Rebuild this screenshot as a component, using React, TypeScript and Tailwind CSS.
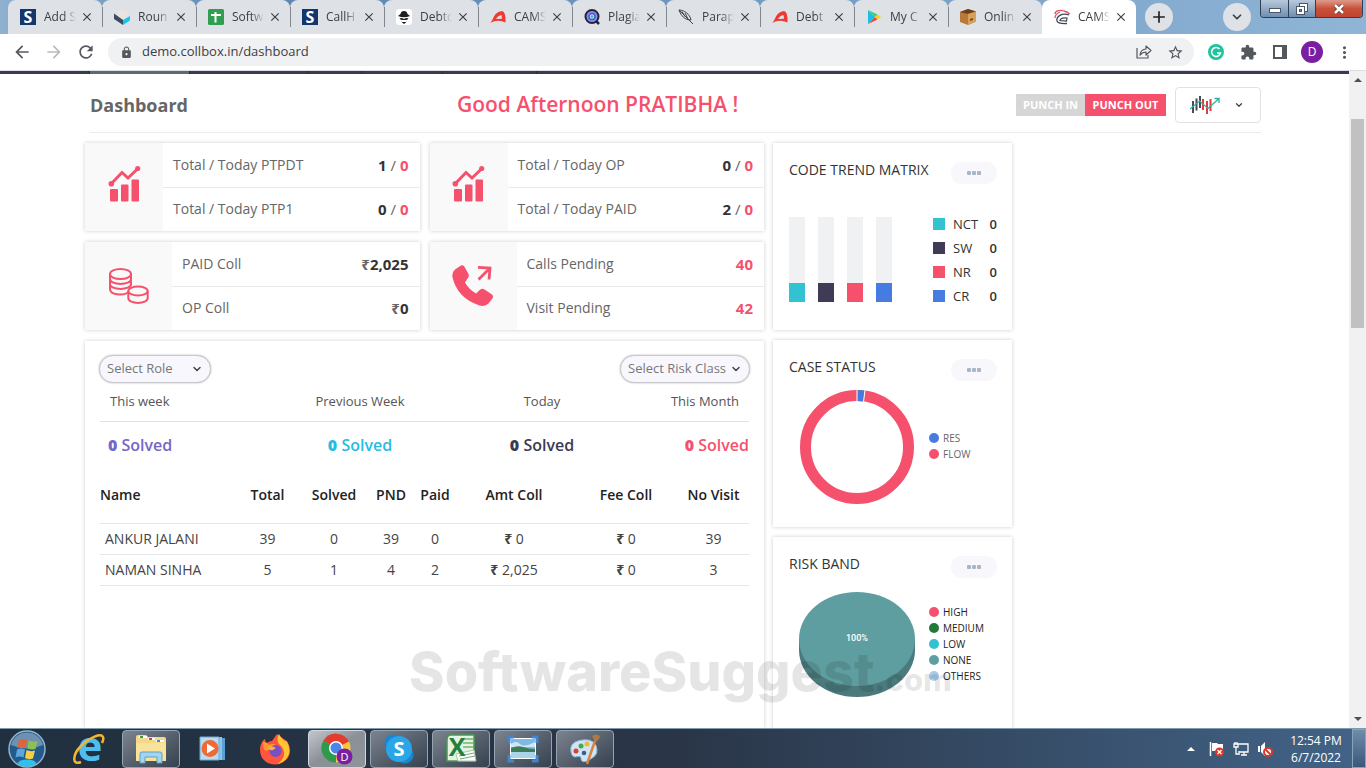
import type { ReactNode } from "react";
import {
    MdAdd,
    MdArrowBack,
    MdArrowForward,
    MdClose,
    MdExtension,
    MdLock,
    MdMoreVert,
    MdRefresh,
    MdStarBorder,
} from "react-icons/md";
import { ChevronDown } from "lucide-react";

/* ---------- tab icons ---------- */

function LetterIcon() {
    return (
        <svg viewBox="0 0 16 16" className="size-4 overflow-visible">
            <rect width="16" height="16" fill="#15356b" />
            <text x="8" y="14" textAnchor="middle" fontSize="16" fontWeight="700" fill="#fff" fontFamily="Open Sans, sans-serif">S</text>
        </svg>
    );
}

function HexIcon() {
    return (
        <svg viewBox="0 0 16 16" className="size-4">
            <path d="M8 0 14 3v6l-5 2-5-3V2z" fill="#e8e4e4" />
            <path d="M0 4.500 9 11v5L0 10z" fill="#3d4a60" />
            <path d="M9 11 16 7v4.500L9 16z" fill="#12c8ee" />
        </svg>
    );
}

function SheetIcon() {
    return (
        <svg viewBox="0 0 16 16" className="size-4">
            <rect width="16" height="16" rx="1.500" fill="#2f9e50" />
            <path d="M3 6h10M7.500 3v10.500" stroke="#fff" strokeWidth="2" />
        </svg>
    );
}

function SpyIcon() {
    return (
        <svg viewBox="0 0 16 16" className="size-4">
            <rect width="16" height="16" rx="3" fill="#fff" />
            <path d="M4.500 5Q5 2 8 2t3.500 3L14 7q-6 2.500-12 0z" fill="#1d1d1f" />
            <path d="M3.500 9.500q2-1 4.500.500 2.500-1.500 4.500-.500-1 2-4.500 1.500-3.500.500-4.500-1.500zM5 12.500q3 1 6 0L8 15z" fill="#1d1d1f" />
        </svg>
    );
}

function SwooshIcon() {
    return (
        <svg viewBox="0 0 16 16" className="size-4">
            <path
                d="M0 14C4 11 3 3 12 2q4 .500 3.500 11.500-5-2.500-10-1.500Q3 12.500 0 14zM6 10l6-.300L11.500 6Q8 6.500 6 10z"
                fill="#ee3a30"
                fillRule="evenodd"
            />
        </svg>
    );
}

function LensIcon() {
    return (
        <svg viewBox="0 0 16 16" className="size-4">
            <circle cx="8" cy="7.500" r="6.500" fill="#8d8bf0" stroke="#22253a" strokeWidth="2" />
            <circle cx="8" cy="7.500" r="3" fill="#c4f2e4" stroke="#4a55d6" strokeWidth="1.500" />
            <circle cx="8" cy="7.500" r="1.300" fill="#29c27b" />
            <path d="m12 12 3 3" stroke="#22253a" strokeWidth="2.500" />
        </svg>
    );
}

function FeatherIcon() {
    return (
        <svg viewBox="0 0 16 16" className="size-4" fill="none" stroke="#444" strokeWidth="1">
            <path d="M1 1c5 0 11 4 12 10-6 0-10-4-12-10zM1 1l14 14M4 2.500l3 5M7 4l3 6" />
        </svg>
    );
}

function PlayIcon() {
    return (
        <svg viewBox="0 0 16 16" className="size-4">
            <path d="M2 1v14l7-7z" fill="#19bfe6" />
            <path d="M2 1l7 7 2.500-2.500z" fill="#3ccf6e" />
            <path d="M2 15l7-7 2.500 2.500z" fill="#f0443e" />
            <path d="M9 8l2.500-2.500L15 8l-3.500 2.500z" fill="#ffc928" />
        </svg>
    );
}

function BoxIcon() {
    return (
        <svg viewBox="0 0 16 16" className="size-4">
            <path d="M0 3 8 0l8 2.500v10L8 16 0 13z" fill="#b9793a" />
            <path d="M0 3 8 0l8 2.500L8 5z" fill="#6e3f17" />
            <path d="M8 5l8-2.500v10L8 16z" fill="#d9a05a" />
            <path d="M10 10l3-1v2l-3 1z" fill="#7a4a20" />
        </svg>
    );
}

function CamsIcon() {
    return (
        <svg viewBox="0 0 16 16" className="size-4" fill="none">
            <path d="M1 5C1 1 7 1 10 2q4 1 5.500 3M1 9q0-4 5-6" stroke="#e0525f" strokeWidth="1.300" />
            <path d="M15 6C8 3 2 8 3 12q1 3 10 2.500" stroke="#3f4658" strokeWidth="1.300" />
            <path d="M6 11.500q1-3.500 7-2.500l-.500 3z" stroke="#3f4658" strokeWidth="1.200" />
        </svg>
    );
}

const tabs: { title: string; icon: ReactNode }[] = [
    { title: "Add S", icon: <LetterIcon /> },
    { title: "Roun", icon: <HexIcon /> },
    { title: "Softw", icon: <SheetIcon /> },
    { title: "CallH", icon: <LetterIcon /> },
    { title: "Debto", icon: <SpyIcon /> },
    { title: "CAMS", icon: <SwooshIcon /> },
    { title: "Plagia", icon: <LensIcon /> },
    { title: "Parap", icon: <FeatherIcon /> },
    { title: "Debt", icon: <SwooshIcon /> },
    { title: "My C", icon: <PlayIcon /> },
    { title: "Onlin", icon: <BoxIcon /> },
    { title: "CAMS", icon: <CamsIcon /> },
];

function TabStrip() {
    return (
        <div className="flex h-[34px] shrink-0 items-center bg-linear-to-r from-[#8fb0cf] via-[#5b86b3] via-20% to-[#8fb5d6] pr-[3px] pl-2">
            {tabs.map((tab, i) => {
                const active = i === tabs.length - 1;
                return (
                    <div
                        key={i}
                        className={`flex h-full w-[94px] shrink-0 items-center rounded-t-lg ${active ? "bg-white" : "bg-[#dee1e6]"}`}
                    >
                        <span className={`h-5 w-px ${i === 0 || active ? "" : "bg-[#80868b]"}`} />
                        <button className="flex items-center gap-2 pl-[11px]">
                            {tab.icon}
                            <span className="w-8 text-left text-xs whitespace-nowrap text-[#3c4043] [mask-image:linear-gradient(to_right,black_60%,transparent)]">
                                {tab.title}
                            </span>
                        </button>
                        <button aria-label="Close tab" className="ml-1 text-[#3c4043]">
                            <MdClose size={14} />
                        </button>
                    </div>
                );
            })}
            <button aria-label="New tab" className="ml-[9px] flex size-7 shrink-0 items-center justify-center rounded-full bg-[#dee1e6] text-[#202124]">
                <MdAdd size={20} />
            </button>
            <button aria-label="Search tabs" className="ml-auto flex size-7 shrink-0 items-center justify-center rounded-full bg-[#dee1e6] text-[#3c4043]">
                <ChevronDown size={14} strokeWidth={3} />
            </button>
            <div className="ml-[9px] flex h-[18px] shrink-0 self-start overflow-hidden rounded-b border border-t-0 border-[#2d3f55]">
                <button aria-label="Minimize" className="flex w-7 items-center justify-center border-r border-[#2d3f55] bg-linear-to-b from-[#b8c9dc] to-[#6f8eb0]">
                    <svg viewBox="0 0 12 8" className="h-2 w-3">
                        <rect x=".5" y="3.500" width="11" height="4" fill="#fff" stroke="#4b5666" />
                    </svg>
                </button>
                <button aria-label="Restore" className="flex w-[27px] items-center justify-center border-r border-[#2d3f55] bg-linear-to-b from-[#b8c9dc] to-[#6f8eb0]">
                    <svg viewBox="0 0 12 12" className="size-3" fill="#fff" stroke="#4b5666">
                        <rect x="3.500" y=".5" width="8" height="8" />
                        <rect x=".5" y="3.500" width="8" height="8" />
                        <rect x="3.500" y="6.500" width="2" height="2" fill="#7f94ad" />
                    </svg>
                </button>
                <button aria-label="Close" className="flex w-[46px] items-center justify-center bg-linear-to-b from-[#dd9a8c] via-[#c9503a] to-[#c04430]">
                    <svg viewBox="0 0 12 10" className="h-[10px] w-3">
                        <path d="m2 1 8 8M10 1 2 9" stroke="#5f3030" strokeWidth="4" />
                        <path d="m2 1 8 8M10 1 2 9" stroke="#fff" strokeWidth="2.500" />
                    </svg>
                </button>
            </div>
        </div>
    );
}

function Toolbar() {
    return (
        <div className="flex h-[37px] shrink-0 items-center border-b border-[#dcdfe0] bg-white px-3 text-[#54585d]">
            <div className="flex gap-3">
                <button aria-label="Back"><MdArrowBack size={20} /></button>
                <button aria-label="Forward" className="text-[#b9bbbe]"><MdArrowForward size={20} /></button>
                <button aria-label="Reload"><MdRefresh size={20} /></button>
            </div>
            <div className="ml-3 flex h-7 flex-1 items-center rounded-full bg-[#f0f1f3] pr-[10px] pl-3">
                <MdLock size={13} />
                <input
                    aria-label="Address"
                    className="ml-[9px] min-w-0 flex-1 bg-transparent text-[13px] text-[#3c4043] outline-none"
                    defaultValue="demo.collbox.in/dashboard"
                />
                <button aria-label="Share">
                    <svg viewBox="0 0 16 16" className="size-4" fill="none" stroke="currentColor" strokeWidth="1.200">
                        <path d="M1 4v10h11v-3" />
                        <path d="M4 11q.500-5.500 6-6V2l5 4.500-5 4.500V8q-3.500 0-6 3z" strokeLinejoin="round" />
                    </svg>
                </button>
                <button aria-label="Bookmark" className="ml-[15px]"><MdStarBorder size={17} /></button>
            </div>
            <button aria-label="Grammarly" className="ml-[14px]">
                <svg viewBox="0 0 16 16" className="size-4">
                    <circle cx="8" cy="8" r="8" fill="#1fc39c" />
                    <path d="M11.500 5A4.500 4.500 0 1 0 12.500 9H9" fill="none" stroke="#fff" strokeWidth="1.500" />
                </svg>
            </button>
            <button aria-label="Extensions" className="ml-4"><MdExtension size={17} /></button>
            <button aria-label="Side panel" className="ml-4">
                <svg viewBox="0 0 14 14" className="size-[14px]">
                    <path d="M1 1h12v12H1z" fill="none" stroke="currentColor" strokeWidth="2" />
                    <path d="M9 1h4v12H9z" fill="currentColor" />
                </svg>
            </button>
            <button aria-label="Profile" className="ml-[14px] flex size-[22px] items-center justify-center rounded-full bg-[#7b1fa2] text-xs text-white">
                D
            </button>
            <button aria-label="Menu" className="ml-3"><MdMoreVert size={19} /></button>
        </div>
    );
}

/* ---------- dashboard ---------- */

function ChartIcon() {
    return (
        <svg viewBox="0 0 33 37" className="mb-2 h-[37px] w-[33px]" fill="#f5516c">
            <rect x="2" y="24" width="8" height="12.500" rx="1" />
            <rect x="13" y="19.500" width="7.500" height="17" rx="1" />
            <rect x="23.500" y="14.500" width="7.500" height="22" rx="1" />
            <path d="M3 19 14 7.500l6 5.500L30 3.500" fill="none" stroke="#f5516c" strokeWidth="3" />
            <circle cx="3.300" cy="18.800" r="2.800" />
            <circle cx="29.700" cy="3.500" r="2.600" />
        </svg>
    );
}

function CoinsIcon() {
    return (
        <svg viewBox="0 0 40 36" className="h-9 w-10" fill="none" stroke="#f5516c" strokeWidth="2">
            <ellipse cx="11.500" cy="6" rx="10.500" ry="5" />
            <path d="M1 6v15c0 6 13 7 18 3.500M22 6v11.500M1 11c0 6.500 21 6.500 21 0M1 16c0 6.500 21 6.500 21 0" />
            <ellipse cx="29" cy="23" rx="9.700" ry="4.500" />
            <path d="M19.300 23v7c0 6.500 19.400 6.500 19.400 0v-7" />
        </svg>
    );
}

function CallIcon() {
    return (
        <svg viewBox="0 0 42 42" className="size-[42px]">
            <path
                d="M9 .5Q10.500-.3 12 1l4.500 8q1 2.500-1 4.500L13 17.500q4 7 11 11l4-3.700Q30 23 32.500 24.500l7.500 5q2 2 0 4.500l-3.500 4.500Q33 42 27.500 40.500 5 33 .3 11.500 0 7 3 4.500z"
                fill="#f5516c"
            />
            <path d="M26.500 14.500 37.500 3.500M26 2.300l12 .8L37 14.500" fill="none" stroke="#f5516c" strokeWidth="2.800" />
        </svg>
    );
}

type Row = { label: string; value: ReactNode };

function Ratio({ total, today }: { total: number; today: number }) {
    return (
        <>
            <b>{total}</b> <span className="text-[#666]">/</span> <b className="text-[#f5516c]">{today}</b>
        </>
    );
}

function Rupees({ amount }: { amount: string }) {
    return (
        <b>
            <span className="text-[#666]">₹</span>
            {amount}
        </b>
    );
}

function StatCard({ icon, rows, wide }: { icon: ReactNode; rows: Row[]; wide?: boolean }) {
    return (
        <section className="flex h-[88px] bg-white shadow-[0_0_4px_rgba(0,0,0,0.2)]">
            <div className={`flex shrink-0 items-center justify-center bg-[#f9f9f9] ${wide ? "w-[87px]" : "w-[78px]"}`}>{icon}</div>
            <dl className="flex flex-1 flex-col divide-y divide-[#e9e9e9]">
                {rows.map((row) => (
                    <div key={row.label} className="flex flex-1 items-center justify-between pr-[11px] pl-[10px]">
                        <dt className="text-sm text-[#666]">{row.label}</dt>
                        <dd className="text-[15px] leading-5 text-[#333]">{row.value}</dd>
                    </div>
                ))}
            </dl>
        </section>
    );
}

function PillSelect({ label, className }: { label: string; className: string }) {
    return (
        <div className={`relative h-7 ${className}`}>
            <select
                aria-label={label}
                className="size-full appearance-none rounded-full border border-[#c8c8cc] bg-[#f8f7fd] pl-[7px] text-[13px] text-[#777] shadow-[0_0_2px_rgba(0,0,0,0.3)]"
            >
                <option>{label}</option>
            </select>
            <ChevronDown size={12} strokeWidth={3} className="pointer-events-none absolute top-2 right-2 text-[#444]" />
        </div>
    );
}

const agents = [
    { name: "ANKUR JALANI", total: 39, solved: 0, pnd: 39, paid: 0, amt: "0", fee: "0", noVisit: 39 },
    { name: "NAMAN SINHA", total: 5, solved: 1, pnd: 4, paid: 2, amt: "2,025", fee: "0", noVisit: 3 },
];

function SolvedPanel() {
    return (
        <section className="flex-1 bg-white px-[15px] pt-[14px] shadow-[0_0_4px_rgba(0,0,0,0.2)]">
            <div className="-mx-px flex justify-between">
                <PillSelect label="Select Role" className="w-[112px]" />
                <PillSelect label="Select Risk Class" className="w-[130px]" />
            </div>
            <table className="w-full table-fixed">
                <colgroup>
                    <col className="w-[180px]" />
                    <col />
                    <col className="w-[204px]" />
                    <col className="w-[105px]" />
                </colgroup>
                <thead>
                    <tr className="h-[38px] border-b border-[#dee2e6] text-[13px] text-[#555] *:font-normal">
                        <th className="pl-[10px] text-left">This week</th>
                        <th>Previous Week</th>
                        <th>Today</th>
                        <th className="pr-[10px] text-right">This Month</th>
                    </tr>
                </thead>
                <tbody>
                    <tr className="h-[47px] text-base font-semibold">
                        <td className="pl-2 text-[#7467c9]"><b>0</b> Solved</td>
                        <td className="text-center text-[#27bce2]"><b>0</b> Solved</td>
                        <td className="text-center text-[#3b3a55]"><b>0</b> Solved</td>
                        <td className="text-right text-[#f5516c]"><b>0</b> Solved</td>
                    </tr>
                </tbody>
            </table>
            <table className="w-full table-fixed text-center text-sm text-[#444]">
                <colgroup>
                    <col />
                    <col className="w-[69px]" />
                    <col className="w-[64px]" />
                    <col className="w-[50px]" />
                    <col className="w-[38px]" />
                    <col className="w-[120px]" />
                    <col className="w-[104px]" />
                    <col className="w-[71px]" />
                </colgroup>
                <thead>
                    <tr className="h-[55px] border-b border-[#e4e6e8] text-[#222] *:font-semibold">
                        <th className="text-left">Name</th>
                        <th>Total</th>
                        <th>Solved</th>
                        <th>PND</th>
                        <th>Paid</th>
                        <th>Amt Coll</th>
                        <th>Fee Coll</th>
                        <th>No Visit</th>
                    </tr>
                </thead>
                <tbody>
                    {agents.map((a) => (
                        <tr key={a.name} className="h-[31px] border-b border-[#e4e6e8]">
                            <td className="pl-[5px] text-left">{a.name}</td>
                            <td>{a.total}</td>
                            <td>{a.solved}</td>
                            <td>{a.pnd}</td>
                            <td>{a.paid}</td>
                            <td><b>₹</b> {a.amt}</td>
                            <td><b>₹</b> {a.fee}</td>
                            <td>{a.noVisit}</td>
                        </tr>
                    ))}
                </tbody>
            </table>
        </section>
    );
}

function SideCard({ title, children }: { title: string; children: ReactNode }) {
    return (
        <section className="min-h-[187px] shrink-0 bg-white pt-[19px] pr-[15px] pl-4 shadow-[0_0_4px_rgba(0,0,0,0.2)]">
            <div className="flex items-start justify-between">
                <h2 className="text-sm leading-4 text-[#333]">{title}</h2>
                <button aria-label={`${title} options`} className="flex h-[22px] w-[46px] items-center justify-center gap-px rounded-full bg-[#f7f7fc]">
                    <span className="size-1 rounded-[1px] bg-[#a9b6c6]" />
                    <span className="size-1 rounded-[1px] bg-[#a9b6c6]" />
                    <span className="size-1 rounded-[1px] bg-[#a9b6c6]" />
                </button>
            </div>
            {children}
        </section>
    );
}

function DotLegend({ items, className }: { items: { label: string; color: string }[]; className: string }) {
    return (
        <ul className={`ml-[14px] pb-[3px] text-[10px] leading-4 ${className}`}>
            {items.map((item) => (
                <li key={item.label} className="flex items-center gap-1">
                    <span className={`size-[10px] rounded-full ${item.color}`} />
                    {item.label}
                </li>
            ))}
        </ul>
    );
}

const codes = [
    { label: "NCT", color: "bg-[#31c3d2]", value: 0 },
    { label: "SW", color: "bg-[#3f3b57]", value: 0 },
    { label: "NR", color: "bg-[#f5516c]", value: 0 },
    { label: "CR", color: "bg-[#467bdf]", value: 0 },
];

function CodeTrend() {
    return (
        <SideCard title="CODE TREND MATRIX">
            <div className="mt-7 flex justify-between">
                <div className="mt-[5px] flex h-[85px] gap-[13px]">
                    {codes.map((c) => (
                        <div key={c.label} className="flex w-4 flex-col justify-end bg-[#f0f1f3]">
                            <div className={`h-[19px] ${c.color}`} />
                        </div>
                    ))}
                </div>
                <ul className="w-16 text-[13px] leading-6 text-[#333]">
                    {codes.map((c) => (
                        <li key={c.label} className="flex items-center">
                            <span className={`mr-2 size-3 ${c.color}`} />
                            {c.label}
                            <b className="ml-auto font-semibold">{c.value}</b>
                        </li>
                    ))}
                </ul>
            </div>
        </SideCard>
    );
}

function CaseStatus() {
    return (
        <SideCard title="CASE STATUS">
            <div className="mt-2 flex items-center pl-[10px]">
                <svg viewBox="0 0 116 116" className="size-[116px]" fill="none" strokeWidth="11">
                    <circle cx="58" cy="58" r="51.500" stroke="#f5516c" />
                    <path d="M58 6.500A51.500 51.500 0 0 1 65 7" stroke="#467bdf" />
                    <path d="M58 0v13M66 1l-1.500 12" stroke="#fff" strokeWidth="1" />
                </svg>
                <DotLegend
                    className="text-[#666]"
                    items={[
                        { label: "RES", color: "bg-[#467bdf]" },
                        { label: "FLOW", color: "bg-[#f5516c]" },
                    ]}
                />
            </div>
        </SideCard>
    );
}

function RiskBand() {
    return (
        <SideCard title="RISK BAND">
            <div className="mt-[14px] mb-12 flex items-center pl-[10px]">
                <svg viewBox="0 0 116 106" className="h-[106px] w-[116px]">
                    <path d="M0 47v11a58 47 0 0 0 116 0V47z" fill="#4a7a7c" />
                    <ellipse cx="58" cy="47" rx="58" ry="47" fill="#5f9ea0" />
                    <text x="58" y="49" textAnchor="middle" fontSize="9" fontWeight="500" fill="#fff" fontFamily="Roboto, sans-serif">100%</text>
                </svg>
                <DotLegend
                    className="text-[#222]"
                    items={[
                        { label: "HIGH", color: "bg-[#f5516c]" },
                        { label: "MEDIUM", color: "bg-[#217a37]" },
                        { label: "LOW", color: "bg-[#31c3d2]" },
                        { label: "NONE", color: "bg-[#5f9ea0]" },
                        { label: "OTHERS", color: "bg-[#a9cbe8]" },
                    ]}
                />
            </div>
        </SideCard>
    );
}

function PageHeader() {
    return (
        <header className="mr-[88px] ml-[90px] flex h-[59px] shrink-0 items-center border-b border-[#ececec] pt-1">
            <h1 className="w-[367px] text-lg font-bold text-[#666]">Dashboard</h1>
            <p className="text-[21px] font-semibold text-[#f5516c]">Good Afternoon PRATIBHA !</p>
            <div className="ml-auto flex text-[11px] font-bold text-white">
                <button className="h-[22px] w-[69px] bg-[#d6d6d6]">PUNCH IN</button>
                <button className="h-[22px] w-[81px] bg-[#f5516c]">PUNCH OUT</button>
            </div>
            <button aria-label="Market menu" className="ml-[9px] flex h-9 w-[86px] items-center rounded border border-[#e2e2e2] pl-[14px]">
                <svg viewBox="0 0 30 20" className="h-5 w-[30px]" fill="none" strokeWidth="2">
                    <path d="M3 6v12M6.500 3.500v12M10 1v12" stroke="#474b57" />
                    <path d="M13 4v11M17 6v13M20.500 4v12" stroke="#e5393d" />
                    <path d="m0 14 9.500-8L18 13.500 28.500 4M24.500 3.500H29V8" stroke="#2bb39c" strokeWidth="1.300" />
                </svg>
                <ChevronDown size={10} strokeWidth={3} className="ml-[14px] text-[#444]" />
            </button>
        </header>
    );
}

function NavEdge() {
    return (
        <nav className="flex h-[3px] shrink-0 divide-x divide-[#23303a] bg-[#3b3953]">
            <span className="w-[90px]" />
            <span className="w-[100px] bg-[#5b6b70]" />
            <span className="w-[119px]" />
            <span className="w-[53px]" />
            <span className="w-[81px]" />
            <span className="w-[94px]" />
            <span className="flex-1" />
        </nav>
    );
}

function ScrollBar() {
    return (
        <div className="flex w-[17px] shrink-0 flex-col items-center bg-[#f1f1f1] py-[7px]">
            <svg viewBox="0 0 8 4" className="h-1 w-2" fill="#505050"><path d="M4 0 8 4H0z" /></svg>
            <div className="mt-[37px] h-[209px] w-[13px] bg-[#c1c1c1]" />
            <svg viewBox="0 0 8 4" className="mt-auto h-1 w-2" fill="#505050"><path d="M0 0h8L4 4z" /></svg>
        </div>
    );
}

/* ---------- taskbar ---------- */

function StartOrb() {
    return (
        <svg viewBox="0 0 38 38" className="size-[38px]">
            <circle cx="19" cy="19" r="18" fill="#24598c" stroke="#8fb4cc" strokeWidth="1.500" />
            <path d="M3 15a16.500 16.500 0 0 1 32 0q-16 7-32 0z" fill="#8fa9c0" opacity=".7" />
            <ellipse cx="19" cy="33" rx="9" ry="3.500" fill="#2fc1ee" />
            <path d="M11 10q4-2 8 0l-1.500 8q-4-2-8 0z" fill="#e2623a" />
            <path d="M20.500 10.500q4 2 9 .5l-2 8q-4 1-8-.5z" fill="#8cc152" />
            <path d="M9 19.500q4-2 8 0l-1.500 8q-4-2-8 0z" fill="#5aa7e0" />
            <path d="M18.500 20q4 2 8.500.5l-2 8q-4 1.500-8-.5z" fill="#f7cf45" />
        </svg>
    );
}

function ExplorerE() {
    return (
        <svg viewBox="0 0 32 32" className="size-8 overflow-visible">
            <text x="17" y="28" textAnchor="middle" fontSize="42" fontWeight="700" fill="#4fbdf0" fontFamily="Open Sans, sans-serif">e</text>
            <path d="M8 29C-1 33-1 22 8 13S28 0 30 4q1 2-1 6" fill="none" stroke="#f4b62c" strokeWidth="2.500" />
        </svg>
    );
}

function FolderIcon() {
    return (
        <svg viewBox="0 0 34 32" className="h-8 w-[34px]">
            <path d="M2 4q0-2 2-2h8l2 2h16q2 0 2 2v22H2z" fill="#f3d88a" />
            <path d="M5 4h8M14 6h7M22 8h8" stroke="#fff" strokeWidth="2" />
            <path d="M6 4h3" stroke="#3c9a4a" strokeWidth="2" />
            <path d="M15 6h3" stroke="#d9402f" strokeWidth="2" />
            <path d="M23 8h3" stroke="#2f8fd0" strokeWidth="2" />
            <path d="M2 10h30v18H2z" fill="#f8e39c" />
            <path d="M6 30V21q0-2 2-2h18q2 0 2 2v9h-5v-6H11v6z" fill="#a5d4ee" stroke="#5c9fc9" />
        </svg>
    );
}

function MediaIcon() {
    return (
        <svg viewBox="0 0 28 26" className="h-[26px] w-7">
            <path d="M8 2h18v22H8z" fill="#5aa0d6" />
            <path d="M4 1h19v23H4z" fill="#8ec4e8" />
            <path d="M1 1h19v23H1z" fill="#b9dbf0" stroke="#6ca9d4" />
            <circle cx="11" cy="12.500" r="8.500" fill="#ee6a35" />
            <path d="M8 7.500v10l8-5z" fill="#fff" />
        </svg>
    );
}

function FirefoxIcon() {
    return (
        <svg viewBox="0 0 32 32" className="size-8">
            <path d="M16 31.500C7 31.500 1 25 1 17 1 12 3 8 6 6q0 3 2 4 2-2 5-2l5-7q8 6 10 7l2 4q3 9-3 15-5 4.500-11 4.500z" fill="#ff553f" />
            <path d="M20 1q2 5 8 8 5 9 0 16-4 5-10 6 8-5 7-12-1-5-5-8-3-5 0-10z" fill="#ffc533" />
            <path d="M4 9q4 0 6 3 3-2 7 0l-3 3-7 3q-4-3-3-9z" fill="#ff9a2e" />
            <circle cx="16.500" cy="18" r="6" fill="#7550c9" />
            <path d="M9 14q4-2 8 1l-3 2q-4 1-5-3z" fill="#ffb02e" />
        </svg>
    );
}

function ChromeIcon() {
    return (
        <svg viewBox="0 0 32 32" className="size-8">
            <path d="M15 15 2.500 7.500A14.500 14.500 0 0 1 28 9z" fill="#e33b2e" />
            <path d="M15 15 28 8.500a14.500 14.500 0 0 1-13 21z" fill="#f8c73c" />
            <path d="M15 15v14.500A14.500 14.500 0 0 1 2.500 7.500z" fill="#2f9a4c" />
            <circle cx="15" cy="15" r="7" fill="#fff" />
            <circle cx="15" cy="15" r="5.500" fill="#4c84ec" />
            <circle cx="23.500" cy="23.500" r="8" fill="#7b1fa2" />
            <text x="23.500" y="27.500" textAnchor="middle" fontSize="11" fill="#fff" fontFamily="Open Sans, sans-serif">D</text>
        </svg>
    );
}

function SkypeIcon() {
    return (
        <svg viewBox="0 0 32 32" className="size-8">
            <circle cx="10" cy="10" r="8.500" fill="#1a86cf" />
            <circle cx="22" cy="22" r="8.500" fill="#1a86cf" />
            <circle cx="16" cy="16" r="13" fill="#2aa5e8" />
            <text x="16" y="23" textAnchor="middle" fontSize="20" fontWeight="700" fill="#fff" fontFamily="Open Sans, sans-serif">S</text>
        </svg>
    );
}

function ExcelIcon() {
    return (
        <svg viewBox="0 0 32 32" className="size-8 overflow-visible">
            <path d="M6 2h23v26H2V7q0-5 4-5z" fill="#e3f2e1" stroke="#4a9a4f" strokeWidth="1.500" />
            <path d="M18 6h10M18 10h10M18 14h10" stroke="#8fc48d" strokeWidth="2" />
            <path d="m11 21 18-4 2 11H13z" fill="#fff" stroke="#a8c9a4" />
            <path d="m14 23 15-3M15 26l15-3" stroke="#7aa87a" />
            <text x="12" y="23" textAnchor="middle" fontSize="25" fontWeight="700" fill="#23803a" fontFamily="Open Sans, sans-serif">X</text>
        </svg>
    );
}

function PhotoIcon() {
    return (
        <svg viewBox="0 0 32 28" className="h-7 w-8">
            <rect x="3" y="3" width="26" height="21" fill="#fff" />
            <rect x="4" y="4" width="24" height="19" fill="#7fb9e6" />
            <path d="M4 9q5-4 9 0t15-2v5H4z" fill="#cfe6f6" />
            <path d="M4 13q7-3 12-1t12 2v3H4z" fill="#3f7c58" />
            <path d="M4 17h24v6H4z" fill="#a9d4ea" />
            <path d="M2 8V2h5M25 2h5v6M30 20v6h-5M7 26H2v-6" fill="none" stroke="#3f86cc" strokeWidth="3" />
        </svg>
    );
}

function PaintIcon() {
    return (
        <svg viewBox="0 0 32 32" className="size-8">
            <path d="M2 19Q0 10 10 7.500q13-3 17 5 3 8-3 12-3 2-7 4-5 1-5-3 0-3-3-2-6 2-7-4.500z" fill="#cfe5f5" stroke="#86b4d6" />
            <circle cx="7" cy="18" r="2.500" fill="#d8402f" />
            <circle cx="12" cy="13" r="2.500" fill="#4ca64c" />
            <circle cx="18" cy="11" r="2.500" fill="#f0b73a" />
            <circle cx="15" cy="20" r="2.300" fill="#3d5f8c" />
            <path d="M27 5 18 31" stroke="#d9833c" strokeWidth="2.500" />
            <path d="M23 3q4-3 8 0-1 5-5 6z" fill="#a97a4a" />
        </svg>
    );
}

const apps: { name: string; icon: ReactNode; state: "pinned" | "open" | "active" }[] = [
    { name: "Internet Explorer", icon: <ExplorerE />, state: "pinned" },
    { name: "Explorer", icon: <FolderIcon />, state: "open" },
    { name: "Media Player", icon: <MediaIcon />, state: "pinned" },
    { name: "Firefox", icon: <FirefoxIcon />, state: "pinned" },
    { name: "Chrome", icon: <ChromeIcon />, state: "active" },
    { name: "Skype", icon: <SkypeIcon />, state: "open" },
    { name: "Excel", icon: <ExcelIcon />, state: "open" },
    { name: "Photos", icon: <PhotoIcon />, state: "open" },
    { name: "Paint", icon: <PaintIcon />, state: "open" },
];

const appStyles = {
    pinned: "border-transparent",
    open: "border-[#98a3b0] bg-linear-to-br from-[#7c848f] to-[#36414f]",
    active: "border-[#d3d8de] bg-linear-to-br from-[#c3c7cc] via-[#8b9097] to-[#90959c]",
};

function Taskbar() {
    return (
        <footer className="flex h-10 shrink-0 items-center border-t border-[#7f99ad] bg-linear-to-r from-[#20303f] via-[#2a3648] via-50% to-[#426488] pl-2 text-white">
            <button aria-label="Start"><StartOrb /></button>
            <div className="ml-[14px] flex gap-1">
                {apps.map((app) => (
                    <button
                        key={app.name}
                        aria-label={app.name}
                        className={`flex h-[38px] w-[58px] items-center justify-center rounded-sm border ${appStyles[app.state]}`}
                    >
                        {app.icon}
                    </button>
                ))}
            </div>
            <div className="ml-auto flex items-center">
                <svg viewBox="0 0 8 4" className="h-1 w-2" fill="#fff"><path d="M4 0 8 4H0z" /></svg>
                <svg viewBox="0 0 16 16" className="ml-[14px] size-4">
                    <path d="M1.500 1v14" stroke="#fff" strokeWidth="1.500" />
                    <path d="M3 2h5l1 1h5v7H3z" fill="#fff" />
                    <circle cx="10.500" cy="11" r="4.500" fill="#d9382b" />
                    <path d="m8.500 9 4 4m0-4-4 4" stroke="#fff" strokeWidth="1.300" />
                </svg>
                <svg viewBox="0 0 16 16" className="ml-2 size-4" fill="none" stroke="#fff" strokeWidth="1.300">
                    <path d="M5 3h10v8H5M8 14h6M11 11v3M1 3h4v3H1zM2 1v2M4 1v2M3 6v7h4" />
                </svg>
                <svg viewBox="0 0 16 16" className="ml-2 size-4">
                    <path d="M1 5h2v6H1zM4 5l4-4v14l-4-4z" fill="#fff" />
                    <circle cx="11" cy="11" r="4" fill="#fff" stroke="#d9382b" strokeWidth="2" />
                    <path d="m8.500 8.500 5 5" stroke="#d9382b" strokeWidth="2" />
                </svg>
                <div className="ml-4 w-[54px] text-center text-xs leading-[17px] whitespace-nowrap">
                    <p>12:54 PM</p>
                    <p>6/7/2022</p>
                </div>
                <button aria-label="Show desktop" className="ml-[9px] h-[39px] w-[14px] border border-[#8ba3ba] bg-linear-to-b from-[#6f8dab] to-[#3b5878]" />
            </div>
        </footer>
    );
}

export default function App() {
    return (
        <div className="flex h-screen flex-col overflow-hidden bg-white font-['Open_Sans','Noto_Sans',sans-serif]">
            <TabStrip />
            <Toolbar />
            <div className="flex min-h-0 flex-1">
                <div className="relative flex min-w-0 flex-1 flex-col overflow-hidden">
                    <NavEdge />
                    <PageHeader />
                    <main className="grid min-h-0 flex-1 grid-cols-[679fr_239fr_243fr] gap-[9px] px-[85px] pt-[10px]">
                        <div className="flex min-h-0 flex-col gap-[11px]">
                            <div className="grid grid-cols-2 gap-x-[10px] gap-y-[11px]">
                                <StatCard
                                    icon={<ChartIcon />}
                                    rows={[
                                        { label: "Total / Today PTPDT", value: <Ratio total={1} today={0} /> },
                                        { label: "Total / Today PTP1", value: <Ratio total={0} today={0} /> },
                                    ]}
                                />
                                <StatCard
                                    icon={<ChartIcon />}
                                    rows={[
                                        { label: "Total / Today OP", value: <Ratio total={0} today={0} /> },
                                        { label: "Total / Today PAID", value: <Ratio total={2} today={0} /> },
                                    ]}
                                />
                                <StatCard
                                    wide
                                    icon={<CoinsIcon />}
                                    rows={[
                                        { label: "PAID Coll", value: <Rupees amount="2,025" /> },
                                        { label: "OP Coll", value: <Rupees amount="0" /> },
                                    ]}
                                />
                                <StatCard
                                    wide
                                    icon={<CallIcon />}
                                    rows={[
                                        { label: "Calls Pending", value: <b className="text-[#f5516c]">40</b> },
                                        { label: "Visit Pending", value: <b className="text-[#f5516c]">42</b> },
                                    ]}
                                />
                            </div>
                            <SolvedPanel />
                        </div>
                        <div className="flex min-h-0 flex-col gap-[10px]">
                            <CodeTrend />
                            <CaseStatus />
                            <RiskBand />
                        </div>
                    </main>
                    <p className="pointer-events-none absolute bottom-[29px] left-[409px] font-['Inter',sans-serif] text-[54px] leading-none font-extrabold text-black/10">
                        SoftwareSuggest<span className="text-[31px]">.com</span>
                    </p>
                </div>
                <ScrollBar />
            </div>
            <Taskbar />
        </div>
    );
}
